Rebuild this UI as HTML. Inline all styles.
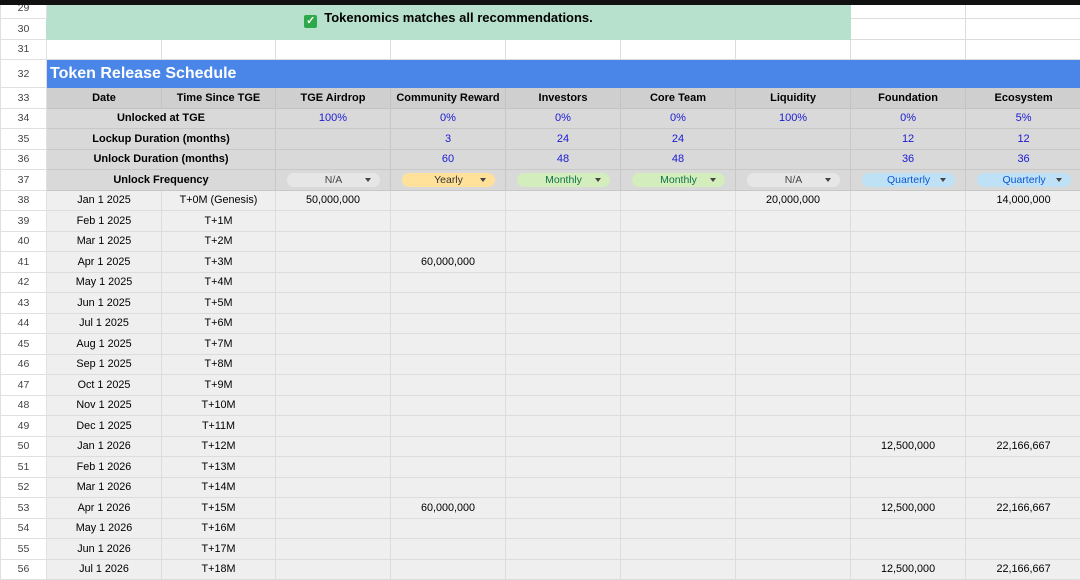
<!DOCTYPE html>
<html><head><meta charset="utf-8"><style>
*{box-sizing:border-box;margin:0;padding:0}
body{width:1080px;height:569px;overflow:hidden;background:#fff;font-family:"Liberation Sans",Arial,sans-serif;font-size:11px;color:#000;position:relative}
.bar{position:absolute;left:0;top:0;width:1080px;height:5px;background:#111;z-index:5}
table{position:absolute;left:0;top:-2.5px;border-collapse:collapse;table-layout:fixed;width:1081px}
td{border:1px solid #dcdcdc;height:20.5px;padding:0 2px;text-align:center;white-space:nowrap;overflow:hidden;line-height:18px}
td.rh{background:#fff;color:#444;font-size:10.5px;border-color:#e0e0e0}
.g{background:#b7e1cd;font-weight:bold;font-size:13px;border-color:#b7e1cd}
.t td.c{background:#4a86e8;color:#fff;font-weight:bold;font-size:16px;text-align:left;padding-left:3px;border-color:#4a86e8}
.h td.c{background:#cfcfcf;font-weight:bold;border-color:#c4c4c4}
.s td.c{background:#d9d9d9;border-color:#c8c8c8}
.s td.b{font-weight:bold}
.s td.v{color:#1a1ad4}
.d td.c{background:#efefef;font-size:10.8px}
.pill{display:block;margin:0 8px 0 9px;height:14px;line-height:14px;border-radius:7px;position:relative;font-size:10.5px}
.pill:after{content:"";position:absolute;right:9px;top:5px;border:3.5px solid transparent;border-top:4px solid #444;border-bottom:0}
.pn{background:#e6e6e6;color:#444}
.py{background:#ffe199;color:#333}
.pg{background:#d4edbc;color:#11734b}
.pb{background:#bfe1f6;color:#0b57d0}
.ck{display:inline-block;width:13px;height:13px;background:#2da84a;border-radius:2px;color:#fff;font-size:11px;line-height:13px;vertical-align:-2px;margin-right:7px;text-align:center}
</style></head><body>
<div class="bar"></div>
<table>
<colgroup><col style="width:46px"><col style="width:115px"><col style="width:114px"><col style="width:115px"><col style="width:115px"><col style="width:115px"><col style="width:115px"><col style="width:115px"><col style="width:115px"><col style="width:116px"></colgroup>
<tr style="height:20.5px"><td class="rh">29</td><td class="g" colspan="7" rowspan="2" style="height:41px"><span class="ck">✓</span>Tokenomics matches all recommendations.</td><td></td><td></td></tr>
<tr><td class="rh">30</td><td></td><td></td></tr>
<tr><td class="rh">31</td><td></td><td></td><td></td><td></td><td></td><td></td><td></td><td></td><td></td></tr>
<tr class="t"><td class="rh" style="height:28px">32</td><td class="c" colspan="9">Token Release Schedule</td></tr>
<tr class="h"><td class="rh">33</td><td class="c">Date</td><td class="c">Time Since TGE</td><td class="c">TGE Airdrop</td><td class="c">Community Reward</td><td class="c">Investors</td><td class="c">Core Team</td><td class="c">Liquidity</td><td class="c">Foundation</td><td class="c">Ecosystem</td></tr>
<tr class="s"><td class="rh">34</td><td class="c b" colspan="2">Unlocked at TGE</td><td class="c v">100%</td><td class="c v">0%</td><td class="c v">0%</td><td class="c v">0%</td><td class="c v">100%</td><td class="c v">0%</td><td class="c v">5%</td></tr>
<tr class="s"><td class="rh">35</td><td class="c b" colspan="2">Lockup Duration (months)</td><td class="c"></td><td class="c v">3</td><td class="c v">24</td><td class="c v">24</td><td class="c"></td><td class="c v">12</td><td class="c v">12</td></tr>
<tr class="s"><td class="rh">36</td><td class="c b" colspan="2">Unlock Duration (months)</td><td class="c"></td><td class="c v">60</td><td class="c v">48</td><td class="c v">48</td><td class="c"></td><td class="c v">36</td><td class="c v">36</td></tr>
<tr class="s"><td class="rh">37</td><td class="c b" colspan="2">Unlock Frequency</td><td class="c"><span class="pill pn">N/A</span></td><td class="c"><span class="pill py">Yearly</span></td><td class="c"><span class="pill pg">Monthly</span></td><td class="c"><span class="pill pg">Monthly</span></td><td class="c"><span class="pill pn">N/A</span></td><td class="c"><span class="pill pb">Quarterly</span></td><td class="c"><span class="pill pb">Quarterly</span></td></tr>
<tr class="d"><td class="rh">38</td><td class="c">Jan 1 2025</td><td class="c">T+0M (Genesis)</td><td class="c">50,000,000</td><td class="c"></td><td class="c"></td><td class="c"></td><td class="c">20,000,000</td><td class="c"></td><td class="c">14,000,000</td></tr>
<tr class="d"><td class="rh">39</td><td class="c">Feb 1 2025</td><td class="c">T+1M</td><td class="c"></td><td class="c"></td><td class="c"></td><td class="c"></td><td class="c"></td><td class="c"></td><td class="c"></td></tr>
<tr class="d"><td class="rh">40</td><td class="c">Mar 1 2025</td><td class="c">T+2M</td><td class="c"></td><td class="c"></td><td class="c"></td><td class="c"></td><td class="c"></td><td class="c"></td><td class="c"></td></tr>
<tr class="d"><td class="rh">41</td><td class="c">Apr 1 2025</td><td class="c">T+3M</td><td class="c"></td><td class="c">60,000,000</td><td class="c"></td><td class="c"></td><td class="c"></td><td class="c"></td><td class="c"></td></tr>
<tr class="d"><td class="rh">42</td><td class="c">May 1 2025</td><td class="c">T+4M</td><td class="c"></td><td class="c"></td><td class="c"></td><td class="c"></td><td class="c"></td><td class="c"></td><td class="c"></td></tr>
<tr class="d"><td class="rh">43</td><td class="c">Jun 1 2025</td><td class="c">T+5M</td><td class="c"></td><td class="c"></td><td class="c"></td><td class="c"></td><td class="c"></td><td class="c"></td><td class="c"></td></tr>
<tr class="d"><td class="rh">44</td><td class="c">Jul 1 2025</td><td class="c">T+6M</td><td class="c"></td><td class="c"></td><td class="c"></td><td class="c"></td><td class="c"></td><td class="c"></td><td class="c"></td></tr>
<tr class="d"><td class="rh">45</td><td class="c">Aug 1 2025</td><td class="c">T+7M</td><td class="c"></td><td class="c"></td><td class="c"></td><td class="c"></td><td class="c"></td><td class="c"></td><td class="c"></td></tr>
<tr class="d"><td class="rh">46</td><td class="c">Sep 1 2025</td><td class="c">T+8M</td><td class="c"></td><td class="c"></td><td class="c"></td><td class="c"></td><td class="c"></td><td class="c"></td><td class="c"></td></tr>
<tr class="d"><td class="rh">47</td><td class="c">Oct 1 2025</td><td class="c">T+9M</td><td class="c"></td><td class="c"></td><td class="c"></td><td class="c"></td><td class="c"></td><td class="c"></td><td class="c"></td></tr>
<tr class="d"><td class="rh">48</td><td class="c">Nov 1 2025</td><td class="c">T+10M</td><td class="c"></td><td class="c"></td><td class="c"></td><td class="c"></td><td class="c"></td><td class="c"></td><td class="c"></td></tr>
<tr class="d"><td class="rh">49</td><td class="c">Dec 1 2025</td><td class="c">T+11M</td><td class="c"></td><td class="c"></td><td class="c"></td><td class="c"></td><td class="c"></td><td class="c"></td><td class="c"></td></tr>
<tr class="d"><td class="rh">50</td><td class="c">Jan 1 2026</td><td class="c">T+12M</td><td class="c"></td><td class="c"></td><td class="c"></td><td class="c"></td><td class="c"></td><td class="c">12,500,000</td><td class="c">22,166,667</td></tr>
<tr class="d"><td class="rh">51</td><td class="c">Feb 1 2026</td><td class="c">T+13M</td><td class="c"></td><td class="c"></td><td class="c"></td><td class="c"></td><td class="c"></td><td class="c"></td><td class="c"></td></tr>
<tr class="d"><td class="rh">52</td><td class="c">Mar 1 2026</td><td class="c">T+14M</td><td class="c"></td><td class="c"></td><td class="c"></td><td class="c"></td><td class="c"></td><td class="c"></td><td class="c"></td></tr>
<tr class="d"><td class="rh">53</td><td class="c">Apr 1 2026</td><td class="c">T+15M</td><td class="c"></td><td class="c">60,000,000</td><td class="c"></td><td class="c"></td><td class="c"></td><td class="c">12,500,000</td><td class="c">22,166,667</td></tr>
<tr class="d"><td class="rh">54</td><td class="c">May 1 2026</td><td class="c">T+16M</td><td class="c"></td><td class="c"></td><td class="c"></td><td class="c"></td><td class="c"></td><td class="c"></td><td class="c"></td></tr>
<tr class="d"><td class="rh">55</td><td class="c">Jun 1 2026</td><td class="c">T+17M</td><td class="c"></td><td class="c"></td><td class="c"></td><td class="c"></td><td class="c"></td><td class="c"></td><td class="c"></td></tr>
<tr class="d"><td class="rh">56</td><td class="c">Jul 1 2026</td><td class="c">T+18M</td><td class="c"></td><td class="c"></td><td class="c"></td><td class="c"></td><td class="c"></td><td class="c">12,500,000</td><td class="c">22,166,667</td></tr>
</table>
</body></html>
